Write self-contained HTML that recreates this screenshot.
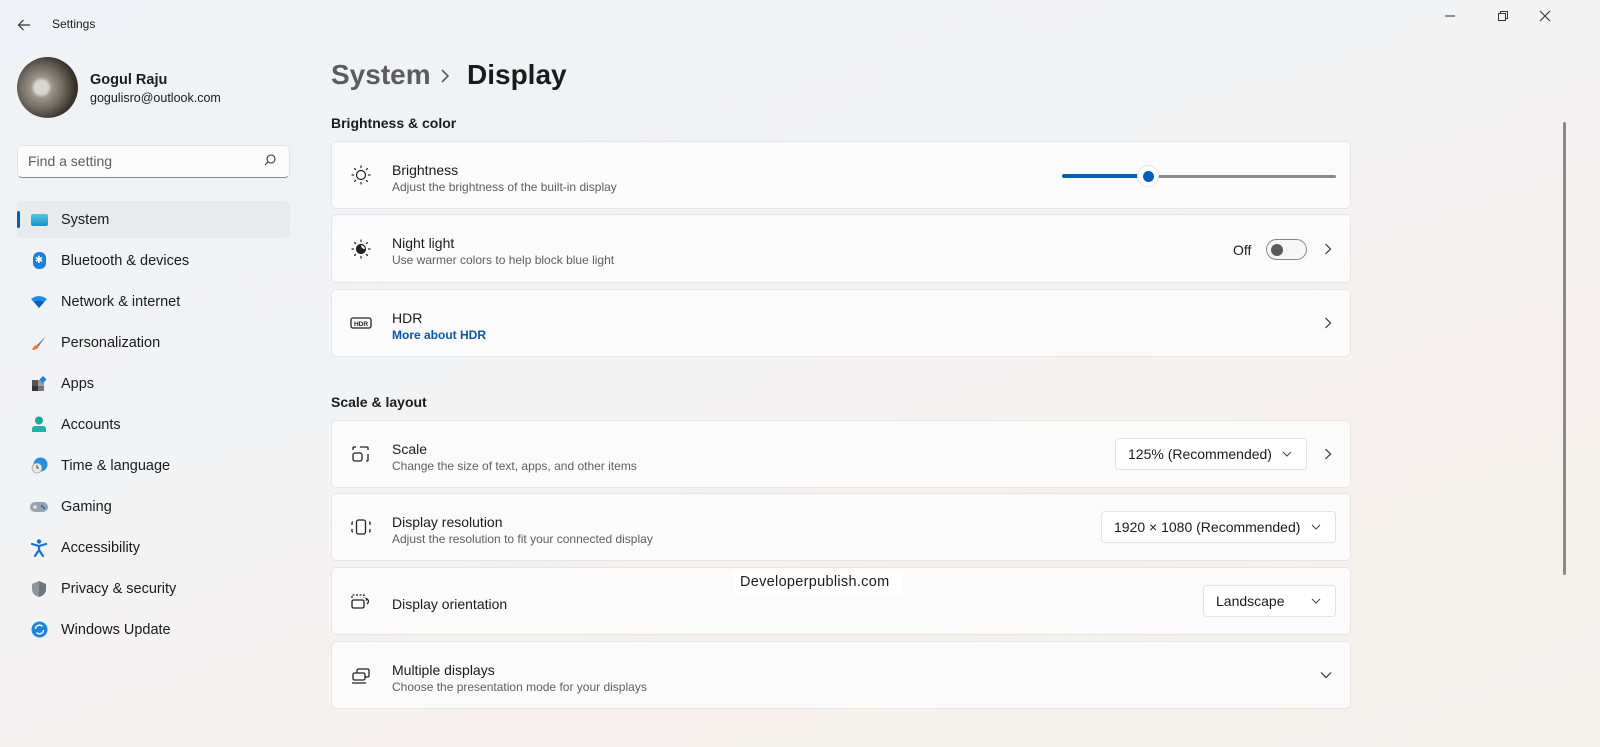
<!DOCTYPE html>
<html><head><meta charset="utf-8"><style>
*{margin:0;padding:0;box-sizing:border-box}
body{width:1600px;height:747px;overflow:hidden;font-family:"Liberation Sans",sans-serif;color:#1b1b1b;background:linear-gradient(160deg,#eff2f6 0%,#f3f3f4 45%,#f6f1ee 70%,#f4f3ee 100%);position:relative}
.abs{position:absolute}
.nav{position:absolute;left:17px;width:273px;height:37px;display:flex;align-items:center;font-size:14.5px;color:#1b1b1b}
.nav .ic{width:44px;display:flex;justify-content:center}
.card{position:absolute;left:331px;width:1020px;background:#fbfbfb;border:1px solid #e6e6e6;border-radius:5px}
.card .ic{position:absolute;left:18px;top:50%;transform:translateY(-50%);width:22px;height:22px}
.card .tt{position:absolute;left:60px;font-size:14px;color:#1b1b1b}
.card .sb{position:absolute;left:60px;font-size:12px;color:#5f5f5f}
.chev{position:absolute;right:18px;top:50%;transform:translateY(-50%)}
.dd{position:absolute;top:50%;transform:translateY(-50%);height:32px;background:#fff;border:1px solid #e3e3e3;border-radius:4px;font-size:14px;display:flex;align-items:center;padding-left:12px}
.dd svg{position:absolute;right:14px;top:12px}
h3{position:absolute;left:331px;font-size:14px;font-weight:bold;color:#1b1b1b}
</style></head><body>
<svg class="abs" style="left:17px;top:18px" width="14" height="14" viewBox="0 0 14 14"><path d="M13 7H1.5M6.5 2L1.5 7l5 5" stroke="#333" stroke-width="1.2" fill="none"/></svg>
<div class="abs" style="left:52px;top:17px;font-size:12px">Settings</div>
<svg class="abs" style="left:1445px;top:10px" width="120" height="14"><path d="M0 6h10" stroke="#333"/><rect x="53.5" y="3.5" width="7" height="7" fill="none" stroke="#333"/><path d="M55.5 3.5V1.5h7v7h-2" fill="none" stroke="#333"/><path d="M95 1l10 10M105 1L95 11" stroke="#333" stroke-width="1.1"/></svg>
<div class="abs" style="left:1563px;top:122px;width:3px;height:453px;background:#8a8a8a;border-radius:2px"></div>
<div class="abs" style="left:17px;top:57px;width:61px;height:61px;border-radius:50%;background:radial-gradient(circle at 40% 50%,#d8d6d0 0 14%,#9b968c 22%,#6f6a62 45%,#3a332c 70%,#2b241f)"></div>
<div class="abs" style="left:90px;top:72px;font-size:14.5px;font-weight:bold">Gogul Raju</div>
<div class="abs" style="left:90px;top:91px;font-size:12.5px">gogulisro@outlook.com</div>
<div class="abs" style="left:17px;top:145px;width:273px;height:33px;background:#fbfbfb;border:1px solid #e3e3e3;border-bottom:1px solid #8a8a8a;border-radius:5px"></div>
<div class="abs" style="left:28px;top:153px;font-size:14px;color:#5d5d5d">Find a setting</div>
<svg class="abs" style="left:264px;top:154px" width="12" height="12"><circle cx="7" cy="5" r="4" fill="none" stroke="#333" stroke-width="1.1"/><path d="M4 8L1 11" stroke="#333" stroke-width="1.1"/></svg>
<div class="nav" style="top:201px;background:#e9eaec;border-radius:5px"><div class="abs" style="left:0;top:10px;width:3px;height:17px;background:#005fb8;border-radius:2px"></div><div class="ic"><div style="width:17px;height:12px;background:linear-gradient(#4ec6e6,#1d90c8);border-radius:2px"></div></div><span>System</span></div>
<div class="nav" style="top:242px"><div class="ic"><div style="width:13px;height:17px;background:#1a7fe0;border-radius:6px;color:#fff;font-size:10px;text-align:center;line-height:17px">✱</div></div><span>Bluetooth &amp; devices</span></div>
<div class="nav" style="top:283px"><div class="ic"><svg width="18" height="14"><path d="M9 13L1 4Q9-2 17 4Z" fill="#1b8de8"/><path d="M9 13L4 7Q9 4 14 7Z" fill="#0d5fc0"/></svg></div><span>Network &amp; internet</span></div>
<div class="nav" style="top:324px"><div class="ic"><svg width="16" height="16"><path d="M15 1L6 10l1.5 1.5L15 1z" fill="#777"/><path d="M6 10c-3 0-4 3-5 5 3 0 6-1 6.5-3.5z" fill="#f07b2c"/></svg></div><span>Personalization</span></div>
<div class="nav" style="top:365px"><div class="ic"><svg width="16" height="16"><rect x="1" y="4" width="6" height="6" fill="#555"/><rect x="1" y="10" width="6" height="5" fill="#333"/><rect x="7" y="10" width="6" height="5" fill="#777"/><rect x="7" y="4" width="6" height="6" fill="#999"/><path d="M12 0l3.5 3.5L12 7 8.5 3.5z" fill="#1a7fe0"/></svg></div><span>Apps</span></div>
<div class="nav" style="top:406px"><div class="ic"><svg width="16" height="17"><circle cx="8" cy="4.5" r="4" fill="#1aa89a"/><path d="M1 16v-3q0-3 3-3h8q3 0 3 3v3z" fill="#1fb5a3"/></svg></div><span>Accounts</span></div>
<div class="nav" style="top:447px"><div class="ic"><svg width="17" height="17"><circle cx="9.5" cy="7.5" r="7" fill="#2b8fe0"/><circle cx="6" cy="11" r="5" fill="#e8e8e8" stroke="#888" stroke-width=".6"/><path d="M6 8v3h2" stroke="#444" fill="none"/></svg></div><span>Time &amp; language</span></div>
<div class="nav" style="top:488px"><div class="ic"><svg width="18" height="12"><rect x="0" y="1" width="18" height="10" rx="5" fill="#9aa3ad"/><path d="M3 6h4M5 4v4" stroke="#fff"/><circle cx="12" cy="5" r="1.2" fill="#1a6fd0"/><circle cx="14" cy="7" r="1.2" fill="#1a6fd0"/></svg></div><span>Gaming</span></div>
<div class="nav" style="top:529px"><div class="ic"><svg width="16" height="18"><circle cx="8" cy="2.5" r="2.2" fill="#1372d6"/><path d="M1 5l7 2 7-2M8 7v4l-4 6M8 11l4 6" stroke="#1372d6" stroke-width="2.2" fill="none" stroke-linecap="round"/></svg></div><span>Accessibility</span></div>
<div class="nav" style="top:570px"><div class="ic"><svg width="16" height="18"><path d="M8 1l7 3v5c0 4-3 7-7 8-4-1-7-4-7-8V4z" fill="#8c949c"/><path d="M8 1l7 3v5c0 4-3 7-7 8z" fill="#6f767d"/></svg></div><span>Privacy &amp; security</span></div>
<div class="nav" style="top:611px"><div class="ic"><svg width="17" height="17"><circle cx="8.5" cy="8.5" r="8" fill="#1a86e0"/><path d="M4.5 8a4 4 0 0 1 7-2.5M12.5 9a4 4 0 0 1-7 2.5" stroke="#fff" stroke-width="1.4" fill="none"/></svg></div><span>Windows Update</span></div>
<div class="abs" style="left:331px;top:59px;font-size:28px;font-weight:600;color:#5c5c5c">System</div>
<svg class="abs" style="left:440px;top:69px" width="10" height="14"><path d="M2 1l6 6-6 6" stroke="#5c5c5c" stroke-width="1.6" fill="none"/></svg>
<div class="abs" style="left:467px;top:59px;font-size:28px;font-weight:600">Display</div>
<h3 style="top:115px">Brightness &amp; color</h3>
<h3 style="top:394px">Scale &amp; layout</h3>
<div class="card" style="top:141px;height:68px">
<svg class="ic" viewBox="0 0 22 22"><circle cx="11" cy="11" r="4.5" fill="none" stroke="#222" stroke-width="1.2"/><g stroke="#222" stroke-width="1.2" stroke-linecap="round"><path d="M11 2v1.5M11 18.5V20M2 11h1.5M18.5 11H20M4.6 4.6l1 1M16.4 16.4l1 1M4.6 17.4l1-1M16.4 5.6l1-1"/></g></svg>
<div class="tt" style="top:20px">Brightness</div><div class="sb" style="top:38px">Adjust the brightness of the built-in display</div>
<div class="abs" style="left:730px;top:32px;width:86px;height:4px;background:#005fb8;border-radius:2px"></div>
<div class="abs" style="left:816px;top:33px;width:188px;height:3px;background:#8a8a8a;border-radius:2px"></div>
<div class="abs" style="left:805px;top:23px;width:22px;height:22px;border-radius:50%;background:#fff;border:1px solid #e3e3e3"></div>
<div class="abs" style="left:811px;top:29px;width:11px;height:11px;border-radius:50%;background:#005fb8"></div>
</div>
<div class="card" style="top:214px;height:69px">
<svg class="ic" viewBox="0 0 22 22"><circle cx="11" cy="11" r="4.5" fill="none" stroke="#222" stroke-width="1.2"/><path d="M11 6.5A4.5 4.5 0 1 0 15.5 11 4 4 0 0 1 11 6.5z" fill="#222"/><g stroke="#222" stroke-width="1.2" stroke-linecap="round"><path d="M11 2v1.5M11 18.5V20M2 11h1.5M18.5 11H20M4.6 4.6l1 1M16.4 16.4l1 1M4.6 17.4l1-1M16.4 5.6l1-1"/></g></svg>
<div class="tt" style="top:20px">Night light</div><div class="sb" style="top:38px">Use warmer colors to help block blue light</div>
<div class="abs" style="left:901px;top:27px;font-size:14px">Off</div>
<div class="abs" style="left:934px;top:24px;width:41px;height:21px;border-radius:11px;border:1px solid #888;background:#f6f6f6"></div>
<div class="abs" style="left:939px;top:29px;width:12px;height:12px;border-radius:50%;background:#5a5a5a"></div>
<svg class="chev" width="8" height="12"><path d="M1.5 1l5 5-5 5" stroke="#333" stroke-width="1.2" fill="none"/></svg>
</div>
<div class="card" style="top:289px;height:68px">
<svg class="ic" viewBox="0 0 22 22"><rect x="1" y="6" width="20" height="10" rx="2" fill="none" stroke="#222" stroke-width="1.3"/><text x="11" y="13.8" font-size="6.5" font-weight="bold" text-anchor="middle" font-family="Liberation Sans" fill="#222">HDR</text></svg>
<div class="tt" style="top:20px">HDR</div><div class="sb" style="top:38px;color:#0a56ad;font-weight:bold">More about HDR</div>
<svg class="chev" width="8" height="12"><path d="M1.5 1l5 5-5 5" stroke="#333" stroke-width="1.2" fill="none"/></svg>
</div>
<div class="card" style="top:420px;height:68px">
<svg class="ic" viewBox="0 0 22 22" fill="none" stroke="#222" stroke-width="1.3"><rect x="3" y="10" width="9" height="8" rx="2"/><path d="M3 7V5q0-1 1-1h2M10 4h7q1 0 1 1v2M18 11v6q0 1-1 1h-1"/></svg>
<div class="tt" style="top:20px">Scale</div><div class="sb" style="top:38px">Change the size of text, apps, and other items</div>
<div class="dd" style="left:783px;width:192px">125% (Recommended)<svg width="10" height="6"><path d="M1 1l4 4 4-4" stroke="#444" fill="none"/></svg></div>
<svg class="chev" width="8" height="12"><path d="M1.5 1l5 5-5 5" stroke="#333" stroke-width="1.2" fill="none"/></svg>
</div>
<div class="card" style="top:493px;height:68px">
<svg class="ic" viewBox="0 0 22 22" fill="none" stroke="#222" stroke-width="1.3"><rect x="6.5" y="4" width="9" height="14" rx="2"/><path d="M3 6q-1 0-1 1v2M2 13v2q0 1 1 1M19 6q1 0 1 1v2M20 13v2q0 1-1 1"/></svg>
<div class="tt" style="top:20px">Display resolution</div><div class="sb" style="top:38px">Adjust the resolution to fit your connected display</div>
<div class="dd" style="left:769px;width:235px">1920 × 1080 (Recommended)<svg width="10" height="6"><path d="M1 1l4 4 4-4" stroke="#444" fill="none"/></svg></div>
</div>
<div class="card" style="top:567px;height:68px">
<svg class="ic" viewBox="0 0 22 22" fill="none" stroke="#222" stroke-width="1.3"><rect x="2" y="10" width="12" height="8" rx="1.5"/><path d="M2 8V5h12v3" stroke-dasharray="2 1.5"/><path d="M17 9q3 2 0 5M15.5 8l1.5 1-1 1.5"/></svg>
<div class="tt" style="top:28px">Display orientation</div>
<div class="dd" style="left:871px;width:133px">Landscape<svg width="10" height="6"><path d="M1 1l4 4 4-4" stroke="#444" fill="none"/></svg></div>
</div>
<div class="abs" style="left:733px;top:571px;width:170px;height:23px;background:#fff"></div>
<div class="abs" style="left:740px;top:574px;font-size:14.5px;letter-spacing:.3px">Developerpublish.com</div>
<div class="card" style="top:641px;height:68px">
<svg class="ic" viewBox="0 0 22 22" fill="none" stroke="#222" stroke-width="1.3"><rect x="3" y="9" width="12" height="7" rx="1.5"/><path d="M7 9V6.5Q7 5 8.5 5h9Q19 5 19 6.5v5q0 1.5-1.5 1.5H15M2 19h14"/></svg>
<div class="tt" style="top:20px">Multiple displays</div><div class="sb" style="top:38px">Choose the presentation mode for your displays</div>
<svg class="chev" width="12" height="8"><path d="M1 1.5l5 5 5-5" stroke="#333" stroke-width="1.2" fill="none"/></svg>
</div>
</body></html>
